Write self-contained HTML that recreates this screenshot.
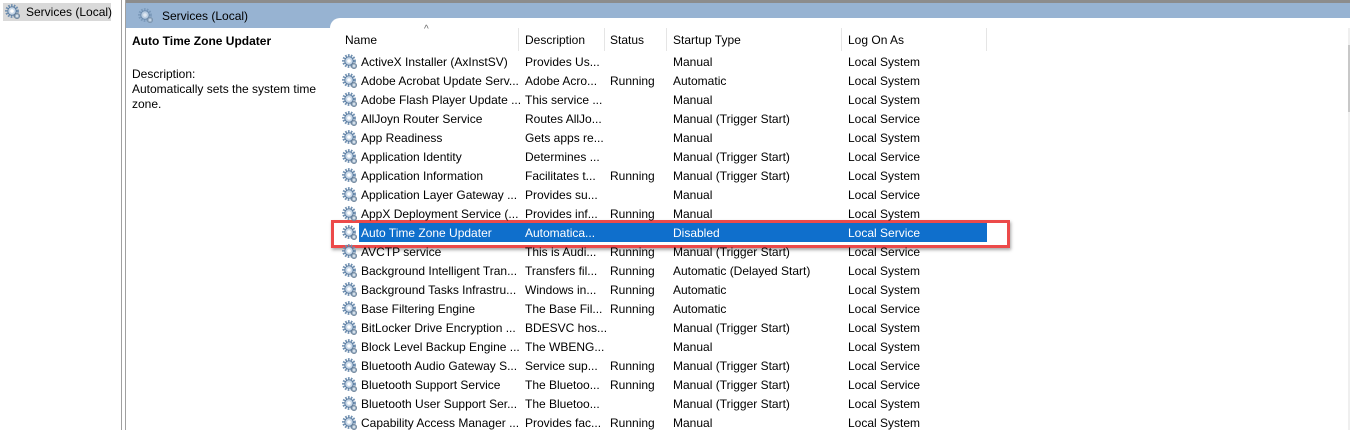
<!DOCTYPE html>
<html><head><meta charset="utf-8"><style>
*{margin:0;padding:0;box-sizing:border-box}
body{width:1350px;height:430px;overflow:hidden;background:#fff;font-family:"Liberation Sans",sans-serif;font-size:12px;color:#000;position:relative}
.a{position:absolute;white-space:nowrap}
svg.g{position:absolute;width:16px;height:16px}
</style></head><body>
<svg width="0" height="0" style="position:absolute"><defs>
<g id="gear">
<circle cx="7" cy="7" r="5.6" fill="none" stroke="#6f8fb0" stroke-width="2.6" stroke-dasharray="1.6 1.2"/>
<circle cx="7" cy="7" r="4.2" fill="#c9d8e8" stroke="#5a7ca0" stroke-width="1"/>
<circle cx="7" cy="7" r="1.8" fill="#fff"/>
<circle cx="12" cy="12" r="2.6" fill="#9fb4c8" stroke="#6a7f95" stroke-width="0.8"/>
<circle cx="12" cy="12" r="0.9" fill="#fff"/>
</g></defs></svg>

<!-- left pane -->
<div class="a" style="left:3px;top:3px;width:108px;height:18px;background:#d9d9d9"></div>
<svg class="g" style="left:5px;top:4px"><use href="#gear"/></svg>
<div class="a" style="left:26px;top:5px">Services (Local)</div>
<div class="a" style="left:121px;top:0;width:1px;height:430px;background:#a0a0a0"></div>
<div class="a" style="left:125px;top:0;width:1px;height:430px;background:#a0a0a0"></div>
<div class="a" style="left:126px;top:0;width:1224px;height:3px;background:#8c8c8c"></div>

<!-- header band -->
<div class="a" style="left:126px;top:3px;width:1224px;height:15px;background:#97b3d2"></div>
<div class="a" style="left:126px;top:18px;width:204px;height:10px;background:#97b3d2"></div>
<div class="a" style="left:330px;top:18px;width:20px;height:10px;background:#97b3d2"></div>
<div class="a" style="left:330px;top:18px;width:20px;height:12px;background:#fff;border-top-left-radius:10px"></div>
<svg class="g" style="left:138px;top:8px"><use href="#gear" opacity="0.7"/></svg>
<div class="a" style="left:162px;top:9px">Services (Local)</div>

<!-- description -->
<div class="a" style="left:132px;top:34px;font-weight:bold">Auto Time Zone Updater</div>
<div class="a" style="left:132px;top:67px">Description:</div>
<div class="a" style="left:132px;top:82px">Automatically sets the system time</div>
<div class="a" style="left:132px;top:97px">zone.</div>

<!-- column headers -->
<div class="a" style="left:424px;top:24px;font-size:10px;color:#666">^</div>
<div class="a" style="left:345px;top:33px">Name</div>
<div class="a" style="left:525px;top:33px">Description</div>
<div class="a" style="left:610px;top:33px">Status</div>
<div class="a" style="left:673px;top:33px">Startup Type</div>
<div class="a" style="left:848px;top:33px">Log On As</div>
<div class="a" style="left:518px;top:28px;width:1px;height:23px;background:#e5e5e5"></div>
<div class="a" style="left:604px;top:28px;width:1px;height:23px;background:#e5e5e5"></div>
<div class="a" style="left:666px;top:28px;width:1px;height:23px;background:#e5e5e5"></div>
<div class="a" style="left:841px;top:28px;width:1px;height:23px;background:#e5e5e5"></div>
<div class="a" style="left:986px;top:28px;width:1px;height:23px;background:#e5e5e5"></div>

<!-- scrollbar -->
<div class="a" style="left:1348px;top:28px;width:2px;height:402px;background:#efefef"></div>
<div class="a" style="left:1348px;top:45px;width:2px;height:67px;background:#c8c8c8"></div>

<!-- selection -->
<div class="a" style="left:331px;top:220px;width:679px;height:28px;border:3px solid #ec4a4a;box-shadow:1px 2px 3px rgba(0,0,0,0.35)"></div>
<div class="a" style="left:359px;top:223px;width:628px;height:19px;background:#0f6fcc"></div>

<div id="rows"></div>
<script>
var R=[
["ActiveX Installer (AxInstSV)","Provides Us...","","Manual","Local System"],
["Adobe Acrobat Update Serv...","Adobe Acro...","Running","Automatic","Local System"],
["Adobe Flash Player Update ...","This service ...","","Manual","Local System"],
["AllJoyn Router Service","Routes AllJo...","","Manual (Trigger Start)","Local Service"],
["App Readiness","Gets apps re...","","Manual","Local System"],
["Application Identity","Determines ...","","Manual (Trigger Start)","Local Service"],
["Application Information","Facilitates t...","Running","Manual (Trigger Start)","Local System"],
["Application Layer Gateway ...","Provides su...","","Manual","Local Service"],
["AppX Deployment Service (...","Provides inf...","Running","Manual","Local System"],
["Auto Time Zone Updater","Automatica...","","Disabled","Local Service"],
["AVCTP service","This is Audi...","Running","Manual (Trigger Start)","Local Service"],
["Background Intelligent Tran...","Transfers fil...","Running","Automatic (Delayed Start)","Local System"],
["Background Tasks Infrastru...","Windows in...","Running","Automatic","Local System"],
["Base Filtering Engine","The Base Fil...","Running","Automatic","Local Service"],
["BitLocker Drive Encryption ...","BDESVC hos...","","Manual (Trigger Start)","Local System"],
["Block Level Backup Engine ...","The WBENG...","","Manual","Local System"],
["Bluetooth Audio Gateway S...","Service sup...","Running","Manual (Trigger Start)","Local Service"],
["Bluetooth Support Service","The Bluetoo...","Running","Manual (Trigger Start)","Local Service"],
["Bluetooth User Support Ser...","The Bluetoo...","","Manual (Trigger Start)","Local System"],
["Capability Access Manager ...","Provides fac...","Running","Manual","Local System"]];
var X=[361,525,610,673,848],h="";
R.forEach(function(r,i){var y=54+i*19;var c=i==9?"color:#fff;":"";
h+='<svg class="g" style="left:342px;top:'+(y+0)+'px"><use href="#gear"/></svg>';
r.forEach(function(t,j){if(t)h+='<div class="a" style="'+c+'left:'+X[j]+'px;top:'+(y+1)+'px">'+t+'</div>';});});
document.getElementById('rows').innerHTML=h;
</script>
</body></html>
